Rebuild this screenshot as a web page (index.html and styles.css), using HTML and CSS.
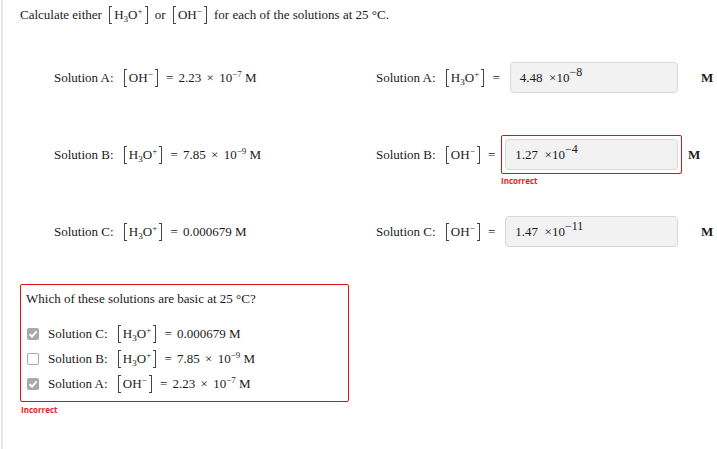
FILE: index.html
```html
<!DOCTYPE html>
<html lang="en">
<head>
  <meta charset="UTF-8" />
  <title>Acids and bases</title>
  <link rel="stylesheet" href="styles.css">
</head>
<body>
  <div class="page">
    <p class="prompt">Calculate either <span class="ion"><span class="lb"></span>H<sub>3</sub>O<sup>+</sup><span class="rb"></span></span> or <span class="ion"><span class="lb"></span>OH<sup>−</sup><span class="rb"></span></span> for each of the solutions at 25 °C.</p>

    <div class="rows">
      <!-- Solution A -->
      <div class="row">
        <div class="given">Solution A: <span class="ion"><span class="lb"></span>OH<sup>−</sup><span class="rb"></span></span> <span class="rel">=</span> 2.23 <span class="op">×</span> 10<sup>−7</sup> M</div>
        <div class="answer">
          <div class="field">
            <span class="label">Solution A: <span class="ion"><span class="lb"></span>H<sub>3</sub>O<sup>+</sup><span class="rb"></span></span> <span class="rel">=</span></span>
            <span class="ans"><span class="box">4.48  ×10<sup class="exp">−8</sup></span></span>
            <span class="unit">M</span>
          </div>
        </div>
      </div>

      <!-- Solution B -->
      <div class="row">
        <div class="given">Solution B: <span class="ion"><span class="lb"></span>H<sub>3</sub>O<sup>+</sup><span class="rb"></span></span> <span class="rel">=</span> 7.85 <span class="op">×</span> 10<sup>−9</sup> M</div>
        <div class="answer">
          <div class="field">
            <span class="label">Solution B: <span class="ion"><span class="lb"></span>OH<sup>−</sup><span class="rb"></span></span> <span class="rel">=</span></span>
            <span class="ans bad"><span class="box">1.27  ×10<sup class="exp">−4</sup></span></span>
            <span class="unit near">M</span>
          </div>
          <div class="note field-note">Incorrect</div>
        </div>
      </div>

      <!-- Solution C -->
      <div class="row">
        <div class="given">Solution C: <span class="ion"><span class="lb"></span>H<sub>3</sub>O<sup>+</sup><span class="rb"></span></span> <span class="rel">=</span> 0.000679 M</div>
        <div class="answer">
          <div class="field">
            <span class="label">Solution C: <span class="ion"><span class="lb"></span>OH<sup>−</sup><span class="rb"></span></span> <span class="rel">=</span></span>
            <span class="ans"><span class="box">1.47  ×10<sup class="exp">−11</sup></span></span>
            <span class="unit">M</span>
          </div>
        </div>
      </div>
    </div>

    <div class="quiz">
      <p class="question">Which of these solutions are basic at 25 °C?</p>
      <div class="choice">
        <span class="cb on"><svg width="12" height="12" viewBox="0 0 12 12"><polyline points="2.5,6.3 5,8.6 9.6,3.4" fill="none" stroke="#fff" stroke-width="2"/></svg></span>
        <span>Solution C: <span class="ion"><span class="lb"></span>H<sub>3</sub>O<sup>+</sup><span class="rb"></span></span> <span class="rel">=</span> 0.000679 M</span>
      </div>
      <div class="choice">
        <span class="cb"></span>
        <span>Solution B: <span class="ion"><span class="lb"></span>H<sub>3</sub>O<sup>+</sup><span class="rb"></span></span> <span class="rel">=</span> 7.85 <span class="op">×</span> 10<sup>−9</sup> M</span>
      </div>
      <div class="choice">
        <span class="cb on"><svg width="12" height="12" viewBox="0 0 12 12"><polyline points="2.5,6.3 5,8.6 9.6,3.4" fill="none" stroke="#fff" stroke-width="2"/></svg></span>
        <span>Solution A: <span class="ion"><span class="lb"></span>OH<sup>−</sup><span class="rb"></span></span> <span class="rel">=</span> 2.23 <span class="op">×</span> 10<sup>−7</sup> M</span>
      </div>
    </div>
    <div class="note">Incorrect</div>
  </div>
</body>
</html>
```

FILE: styles.css
```css
/* Base */
body {
  margin: 0;
  font-family: "Liberation Serif", "Times New Roman", serif;
  font-size: 13px;
  color: #1a1a1a;
  background: #fff;
}

.page {
  margin-left: 1px;
  border-left: 2px solid #e6e6e6;
  min-height: 449px;
  padding: 6px 0 0 17px;
  box-sizing: border-box;
}

.prompt {
  margin: 0;
  line-height: 16px;
}

/* Chemistry notation: square brackets drawn as thin borders */
.ion {
  white-space: nowrap;
  margin: 0 4px 0 7px;
}
.prompt .ion {
  margin: 0 4px 0 4px;
}
.lb, .rb {
  display: inline-block;
  width: 3px;
  height: 18px;
  border: 1px solid #444;
  vertical-align: -5px;
  box-sizing: border-box;
}
.lb {
  border-right: none;
  margin-right: 2px;
}
.rb {
  border-left: none;
  margin-left: 2px;
}
.rel {
  margin: 0 2px 0 1px;
}
.op {
  margin: 0 2px;
}
sub, sup {
  font-size: 9px;
  line-height: 0;
}
sub {
  vertical-align: -3px;
}
sup {
  vertical-align: 5px;
}

/* Solution rows */
.rows {
  margin-top: 15px;
}
.row {
  display: grid;
  grid-template-columns: 322px 1fr;
  align-items: center;
  height: 77px;
  padding-left: 34px;
}
.given {
  line-height: 16px;
  white-space: nowrap;
}

.field {
  display: flex;
  align-items: center;
}
.label {
  white-space: nowrap;
  margin-right: 4px;
}
.ans {
  flex: 1;
  padding: 3px;
  border: 1px solid transparent;
  border-radius: 2px;
}
.ans.bad {
  border: 1px solid #e0101a;
}
.box {
  display: block;
  height: 31px;
  line-height: 29px;
  box-sizing: border-box;
  padding-left: 9px;
  background: #f2f2f2;
  border: 1px solid #d8d8d8;
  border-radius: 4px;
  white-space: pre;
}
.box .exp {
  font-size: 12px;
  vertical-align: 6px;
}
.unit {
  width: 35px;
  box-sizing: border-box;
  padding-left: 19px;
  font-weight: bold;
}
.unit.near {
  padding-left: 6px;
}

.note {
  font-family: "Open Sans", "Liberation Sans", sans-serif;
  font-weight: bold;
  font-size: 8px;
  line-height: 12px;
  color: #e41b23;
  margin-top: 2px;
  margin-left: 1px;
}
.field-note {
  margin: 1px 0 -13px 125px;
}

/* Multiple-choice question */
.quiz {
  width: 329px;
  box-sizing: border-box;
  margin-top: 14px;
  border: 1px solid #e0101a;
  border-radius: 2px;
  padding: 6px 5px 5px 5px;
}
.question {
  margin: 0 0 14px;
  line-height: 16px;
}
.choice {
  display: flex;
  align-items: center;
  height: 25px;
  white-space: nowrap;
}
.cb {
  display: inline-flex;
  width: 12px;
  height: 12px;
  box-sizing: border-box;
  margin: 0 9px 0 1px;
  border: 1px solid #a9a9a9;
  border-radius: 2px;
  background: #fff;
}
.cb.on {
  background: #a9a9a9;
  border: none;
}
```
